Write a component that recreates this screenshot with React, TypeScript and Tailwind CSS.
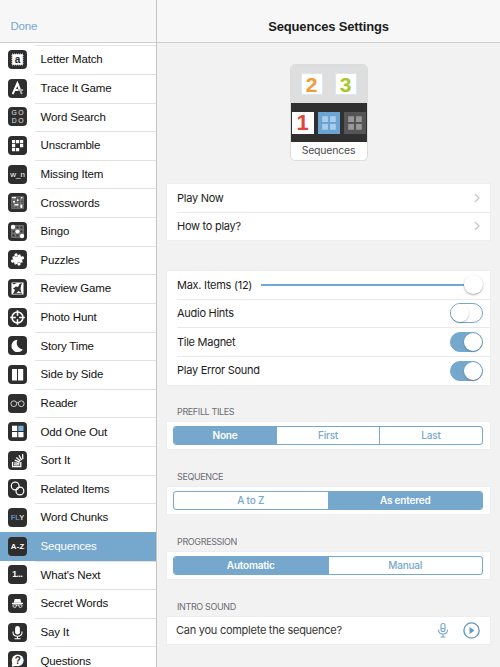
import React from "react";

type Name =
  | "Letter Match" | "Trace It Game" | "Word Search" | "Unscramble" | "Missing Item" | "Crosswords"
  | "Bingo" | "Puzzles" | "Review Game" | "Photo Hunt" | "Story Time" | "Side by Side" | "Reader"
  | "Odd One Out" | "Sort It" | "Related Items" | "Word Chunks" | "Sequences" | "What's Next"
  | "Secret Words" | "Say It" | "Questions";

const HELV = "font-['Liberation_Sans',Arial,sans-serif]";

/* Each glyph is drawn on a 19x19 tile. */
const glyphs: Record<Name, React.ReactNode> = {
  "Letter Match": (
    <>
      <rect x="4.2" y="4.2" width="10.6" height="10.6" fill="#fff" />
      <rect x="4" y="4" width="11" height="11" fill="none" stroke="#fff" strokeWidth=".8" strokeDasharray="1 1" />
      <text x="9.5" y="12.7" fontSize="10" fontWeight="bold" textAnchor="middle" fill="#222">a</text>
    </>
  ),
  "Trace It Game": (
    <g fill="none" strokeLinecap="round" strokeWidth="2">
      <path d="M9.700 4.500L13.500 14.300M9 11H14.200" stroke="#aaa" />
      <path d="M5 14.300L9.300 4.500L11.200 9.500M6.800 11H9" stroke="#fff" />
    </g>
  ),
  "Word Search": (
    <g fill="#e4e4e4" fontSize="6.8" textAnchor="middle">
      <text x="6.1" y="8.4">G</text><text x="13" y="8.4">O</text>
      <text x="6.1" y="16.2">D</text><text x="13" y="16.2">O</text>
    </g>
  ),
  Unscramble: (
    <path fill="#fff" d="M4 4h3.2v3.2H4zM8 4h3.2v3.2H8zM12 4h3.2v3.2H12zM4 8h3.2v3.2H4zM12 8h3.2v3.2H12zM8 12h3.2v3.2H8zM4 12h3.2v3.2H4z" />
  ),
  "Missing Item": <text x="9.5" y="12" fontSize="8" textAnchor="middle" fill="#fff">w_n</text>,
  Crosswords: (
    <>
      <rect x="3.6" y="3.6" width="12" height="12" fill="#555" />
      <path fill="none" stroke="#888" strokeWidth=".6" d="M3.6 3.6h12v12h-12zM6.5 4v11M9.5 4v11M12.5 4v11M4 7h11M4 10h11M4 13h11" />
      <path fill="#fff" d="M4 4h4v1.3H4zM13 4h1.600v1.600h-1.600zM5 8h2v1.500H5zM9 6.500h1.500V8H9zM6.500 11h4v1.500h-4zM12.500 11.500h1.800v3.500h-1.800z" />
    </>
  ),
  Bingo: (
    <>
      <g fill="none" stroke="#888" strokeWidth=".7">
        <path d="M3.5 3.5h12v12h-12zM7.5 3.5v12M11.5 3.5v12M3.5 7.5h12M3.5 11.5h12" />
        <circle cx="9.5" cy="5.5" r="1.4" /><circle cx="13.5" cy="5.5" r="1.4" /><circle cx="5.5" cy="9.5" r="1.4" />
        <circle cx="13.5" cy="9.5" r="1.4" /><circle cx="5.5" cy="13.5" r="1.4" /><circle cx="9.5" cy="13.5" r="1.4" />
      </g>
      <g fill="#fff"><circle cx="5" cy="5" r="2.2" /><circle cx="9.5" cy="9.5" r="2.1" /><circle cx="14" cy="14" r="2.2" /></g>
    </>
  ),
  Puzzles: (
    <g fill="#fff" transform="rotate(-18 9.5 9.5)">
      <path d="M5.300 5.300H8.300V13.700H5.300zM10.700 5.300H13.700V13.700H10.700zM7.500 6.500h4v6h-4z" />
      <circle cx="9.5" cy="4.700" r="1.600" /><circle cx="14.700" cy="9.5" r="1.600" /><circle cx="9.5" cy="14.300" r="1.600" /><circle cx="4.300" cy="9.5" r="1.600" />
    </g>
  ),
  "Review Game": (
    <>
      <rect x="3.5" y="3.5" width="12" height="12" fill="#fff" />
      <path fill="#333" d="M5 9.500l3-2 2 .500 1.500-3 2.500-1-1 3-.5 3 1 4-3-2-2 2H5.500l1.500-3zM4 4h4.500L6 5.500zM5 14.200h9v.8H5z" />
    </>
  ),
  "Photo Hunt": (
    <g fill="none" stroke="#fff" strokeWidth="1.5">
      <circle cx="9.5" cy="9.5" r="5.500" />
      <path d="M9.5 2.200v5.600M9.5 11.200v5.600M2.200 9.500h5.600M11.200 9.500h5.600" strokeWidth="1.600" />
    </g>
  ),
  "Story Time": <path fill="#fff" d="M9.600 3.700A6.500 6.500 0 0 0 14.800 13.400A6.200 6.200 0 1 1 9.600 3.700z" />,
  "Side by Side": <path fill="#fff" d="M4 4h5v11.500H4zM10 4h5.200v11.500H10z" />,
  Reader: (
    <g fill="none" stroke="#ddd" strokeWidth=".9">
      <circle cx="5.8" cy="9.7" r="2.9" /><circle cx="13.200" cy="9.7" r="2.9" /><path d="M8.400 8.900q1.100-.7 2.200 0" />
    </g>
  ),
  "Odd One Out": (
    <>
      <path fill="#fff" d="M4 3.700h5.200v5.200H4zM4 10h5.200v5.200H4zM10.300 10h5.200v5.200h-5.200z" />
      <path fill="#78b4de" d="M10.300 3.700h5.200v5.200h-5.200z" />
    </>
  ),
  "Sort It": (
    <g fill="none" stroke="#fff" strokeWidth="1.300">
      <path d="M4.600 11v4.700h8.200V11M6 13.900h5.400M6.100 11.800l5.300.5M6.700 9.200l5 2M8.300 6.400l4.100 3.700M11 4.200l2.600 4.900M14.600 3l.2 5.200" />
    </g>
  ),
  "Related Items": (
    <g fill="none" stroke="#fff" strokeWidth="1.200">
      <circle cx="7.200" cy="7" r="3.900" /><circle cx="11.900" cy="12" r="3.900" />
    </g>
  ),
  "Word Chunks": (
    <text x="9.5" y="12.400" fontSize="7.500" fontWeight="bold" textAnchor="middle" fill="#d4d4d4"><tspan fill="#6590b0">FL</tspan>Y</text>
  ),
  Sequences: <text x="9.5" y="12.400" fontSize="7.800" fontWeight="bold" textAnchor="middle" fill="#fff" textLength="13.500">A-Z</text>,
  "What's Next": <text x="9.5" y="12.400" fontSize="8.500" fontWeight="bold" textAnchor="middle" fill="#fff" textLength="10.500">1...</text>,
  "Secret Words": (
    <>
      <path fill="#fff" d="M5.800 8.600L6.700 5h5.600l.9 3.600zM4 8.700h11v1.200H4z" />
      <path fill="#333" stroke="#fff" strokeWidth=".8" d="M4.800 10.800h3.700q0 2.800-1.800 2.800t-1.900-2.800zM10.500 10.800h3.700q0 2.800-1.800 2.800t-1.900-2.800z" />
      <path stroke="#fff" strokeWidth=".8" d="M8 11h3" />
    </>
  ),
  "Say It": (
    <>
      <rect x="7.100" y="3" width="4.800" height="8.600" rx="2.400" fill="#fff" />
      <path d="M5 8.500v1q0 3.700 4.500 3.700T14 9.500v-1M9.500 13v2.400M6.500 15.700h6" fill="none" stroke="#fff" strokeWidth="1.100" />
    </>
  ),
  Questions: (
    <>
      <circle cx="9.7" cy="9.3" r="5.900" fill="#fff" /><path d="M4.500 10.500l-.7 5.300 5-1z" fill="#fff" />
      <text x="9.7" y="12.800" fontSize="10" fontWeight="bold" textAnchor="middle" fill="#2e2e2e">?</text>
    </>
  ),
};

const names = Object.keys(glyphs) as Name[];

function SidebarRow({ name }: { name: Name }) {
  const on = name === "Sequences";
  return (
    <div className={`flex h-[28.63px] shrink-0 items-center pl-2 ${on ? "bg-[#76a7cc]" : ""}`}>
      <svg viewBox="0 0 19 19" className={`size-[19px] shrink-0 rounded-[4px] bg-[#2e2e2e] ${HELV}`}>{glyphs[name]}</svg>
      <div className={`ml-[7.5px] flex h-full flex-1 items-center border-t pl-1.5 text-[11.5px] tracking-[-0.16px] whitespace-nowrap ${on ? "border-[#76a7cc] text-white" : "border-[#e2e2e2] text-[#111]"}`}>
        {name}
      </div>
    </div>
  );
}

function Card({ children, className = "" }: { children: React.ReactNode; className?: string }) {
  return <div className={`ml-[10px] w-[323px] shrink-0 bg-white shadow-[0_0_0_1px_#eeeeee] ${className}`}>{children}</div>;
}

function Row({ label, children, last = false }: { label: string; children: React.ReactNode; last?: boolean }) {
  return (
    <div className={`ml-[10px] flex flex-1 items-center justify-between pr-[7px] text-[11px] tracking-[-0.27px] text-[#1c1c1c] ${last ? "" : "border-b border-[#e9e9e9]"}`}>
      <span className="whitespace-nowrap">{label}</span>
      {children}
    </div>
  );
}

function Chevron() {
  return (
    <svg viewBox="0 0 8 10" className="mr-0.5 h-[10px] w-2" fill="none" stroke="#c4c4c8" strokeWidth="1.2">
      <path d="M2 1l4 4-4 4" />
    </svg>
  );
}

function Toggle({ on = false }: { on?: boolean }) {
  return (
    <div className={`flex h-5 w-[33px] items-center rounded-full border-[1.5px] border-[#76a7cc] ${on ? "justify-end bg-[#76a7cc]" : "bg-white"}`}>
      <div className="size-[18px] rounded-full bg-white shadow-[0_1px_2px_rgba(0,0,0,0.25)]" />
    </div>
  );
}

function Section({ title, children }: { title: string; children: React.ReactNode }) {
  return (
    <div className="flex h-[65px] shrink-0 flex-col">
      <div className="flex h-[20px] items-center pl-5 text-[9px] tracking-[-0.36px] text-[#6d6d72]">{title}</div>
      <Card className="flex h-[27.5px] items-center">{children}</Card>
    </div>
  );
}

function Segments({ items, active }: { items: string[]; active: number }) {
  return (
    <div className="ml-[6px] flex h-[19px] w-[310px] overflow-hidden rounded-[3px] border border-[#76a7cc]">
      {items.map((t, i) => (
        <div key={t} className={`flex flex-1 items-center justify-center text-[10px] tracking-[-0.2px] ${i > 0 ? "border-l border-[#76a7cc]" : ""} ${i === active ? "bg-[#76a7cc] font-semibold text-white" : "font-medium text-[#76a7cc]"}`}>
          {t}
        </div>
      ))}
    </div>
  );
}

function PreviewTile() {
  const squares = "M3.5 4h5.5v5.5H3.5zM11 4h5.500v5.500H11zM3.5 11.500h5.500v5.500H3.500zM11 11.500h5.500v5.500H11z";
  return (
    <div className={`flex h-[97px] w-[78px] flex-col overflow-hidden rounded-[5px] border border-[#dcdcdc] bg-white ${HELV}`}>
      <div className="flex h-[38px] shrink-0 items-center justify-center gap-3 bg-[#dedede] text-[21px] leading-none font-bold">
        <span className="flex size-[22px] items-center justify-center border border-[#dce8ef] bg-white text-[#f09a38]">2</span>
        <span className="flex size-[22px] items-center justify-center border border-[#dce8ef] bg-white text-[#a8c72e]">3</span>
      </div>
      <div className="flex h-[39px] shrink-0 items-center justify-center gap-1 bg-[#303030]">
        <span className="flex size-[22px] items-center justify-center bg-white text-[22px] leading-none font-bold text-[#e0443a]">1</span>
        <svg viewBox="0 0 20 21" className="h-[22px] w-[22px] bg-[#6ca5d3]"><path d={squares} fill="#a9cdea" /></svg>
        <svg viewBox="0 0 20 21" className="h-[22px] w-[22px] bg-[#555]"><path d={squares} fill="#999" /></svg>
      </div>
      <div className="flex flex-1 items-center justify-center font-[Inter,sans-serif] text-[10.5px] tracking-[-0.2px] text-[#4c4c4c]">Sequences</div>
    </div>
  );
}

export default function App() {
  return (
    <div className={`flex h-[667px] w-[500px] overflow-hidden bg-[#f2f2f2] ${HELV}`}>
      <aside className="flex w-[157px] shrink-0 flex-col overflow-hidden border-r border-[#c5c5c5] bg-white">
        <header className="flex h-[43px] shrink-0 items-end border-b border-[#cfcfcf] bg-[#f7f7f7] pb-[7px] pl-[10.5px] text-[11.5px] tracking-[-0.2px] text-[#76a7cc]">Done</header>
        <div className="flex flex-col pt-[2.3px]">{names.map((n) => <SidebarRow key={n} name={n} />)}</div>
      </aside>
      <main className="flex min-w-0 flex-1 flex-col font-[Inter,sans-serif]">
        <header className={`flex h-[43px] shrink-0 items-end justify-center border-b border-[#cfcfcf] bg-[#f7f7f7] pb-[6px] text-[13px] font-bold tracking-[-0.17px] text-[#1c1c1c] ${HELV}`}>
          <h1>Sequences Settings</h1>
        </header>
        <div className="flex h-[141px] shrink-0 justify-center pt-[21px]"><PreviewTile /></div>
        <Card className="flex h-[56px] flex-col">
          <Row label="Play Now"><Chevron /></Row>
          <Row label="How to play?" last><Chevron /></Row>
        </Card>
        <Card className="mt-[31px] flex h-[113.5px] flex-col">
          <Row label="Max. Items (12)">
            <div className="ml-[9px] flex flex-1 items-center">
              <div className="h-[1.5px] flex-1 bg-[#6fa9d4]" />
              <div className="size-[19px] rounded-full bg-white shadow-[0_1px_2px_rgba(0,0,0,0.35)]" />
            </div>
          </Row>
          <Row label="Audio Hints"><Toggle /></Row>
          <Row label="Tile Magnet"><Toggle on /></Row>
          <Row label="Play Error Sound" last><Toggle on /></Row>
        </Card>
        <div className="mt-[17px] flex flex-col">
          <Section title="PREFILL TILES"><Segments items={["None", "First", "Last"]} active={0} /></Section>
          <Section title="SEQUENCE"><Segments items={["A to Z", "As entered"]} active={1} /></Section>
          <Section title="PROGRESSION"><Segments items={["Automatic", "Manual"]} active={0} /></Section>
          <Section title="INTRO SOUND">
            <span className="flex-1 pl-[9px] text-[11px] tracking-[-0.26px] text-[#333]">Can you complete the sequence?</span>
            <svg viewBox="0 0 12 16" className="h-4 w-3" fill="none" stroke="#76a7cc" strokeWidth="1.1">
              <rect x="4" y="1.5" width="4" height="8" rx="2" />
              <path d="M1.5 7.5q0 4.5 4.5 4.5t4.500-4.500M6 12v3M3.500 15h5M4 6.500h4" />
            </svg>
            <svg viewBox="0 0 17 17" className="mr-[10px] ml-[14px] size-[17px]">
              <circle cx="8.5" cy="8.5" r="7.6" fill="none" stroke="#6499c2" strokeWidth="1.4" />
              <path d="M6.500 5v7l5-3.500z" fill="#6499c2" />
            </svg>
          </Section>
        </div>
      </main>
    </div>
  );
}
